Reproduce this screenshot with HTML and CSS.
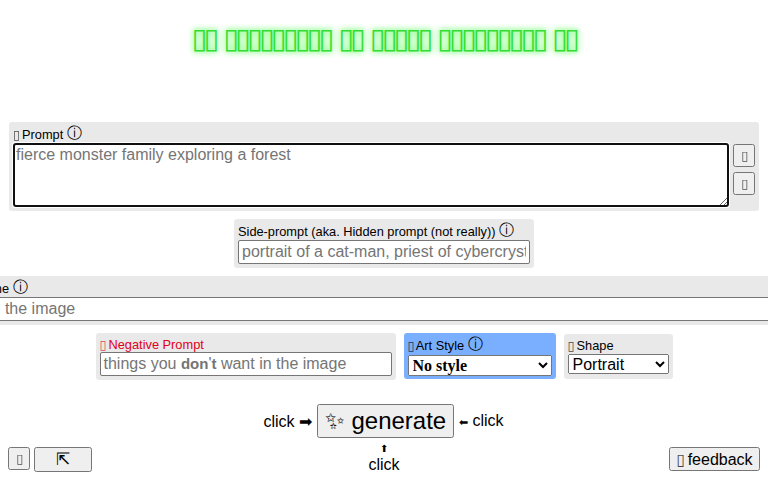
FILE: index.html
```html
<!DOCTYPE html>
<html lang="en">
<head>
    <meta charset="UTF-8">
    <meta name="viewport" content="width=device-width, initial-scale=1.0">
    <title>AI Image Generator</title>
    <link rel="stylesheet" href="styles.css">
</head>
<body>
    <h1 class="title"><span class="tofu">▯▯</span> <span class="tofu">▯▯▯▯▯▯▯▯▯</span> <span class="tofu">▯▯</span> <span class="tofu">▯▯▯▯▯</span> <span class="tofu">▯▯▯▯▯▯▯▯▯</span> <span class="tofu">▯▯</span></h1>

    <div class="prompt-panel">
        <div class="prompt-main">
            <div class="label"><span class="tofu">▯</span> Prompt <span class="info">ⓘ</span></div>
            <textarea class="prompt-input" placeholder="fierce monster family exploring a forest" autofocus></textarea>
        </div>
        <div class="prompt-tools">
            <button class="tool-btn"><span class="tofu">▯</span></button>
            <button class="tool-btn"><span class="tofu">▯</span></button>
        </div>
    </div>

    <div class="row">
        <div class="panel side-panel">
            <div class="label">Side-prompt (aka. Hidden prompt (not really)) <span class="info">ⓘ</span></div>
            <input class="text-input" placeholder="portrait of a cat-man, priest of cybercrystal">
        </div>
    </div>

    <div class="row">
        <div class="panel wide-panel">
            <div class="label wide-label">Image name <span class="info">ⓘ</span></div>
            <input class="text-input" placeholder="describe the image">
        </div>
    </div>

    <div class="row options">
        <div class="panel negative-panel">
            <div class="label negative-label"><span class="tofu">▯</span> Negative Prompt</div>
            <div class="text-input fake-input">things you <b>don</b>'<b>t</b> want in the image</div>
        </div>
        <div class="panel style-panel">
            <div class="label"><span class="tofu">▯</span> Art Style <span class="info">ⓘ</span></div>
            <select class="style-select"><option>No style</option></select>
        </div>
        <div class="panel shape-panel">
            <div class="label"><span class="tofu">▯</span> Shape</div>
            <select class="shape-select"><option>Portrait</option></select>
        </div>
    </div>

    <div class="generate-row">
        <span>click ➡</span>
        <button class="generate-btn">&#x2728;&#xFE0E; generate</button>
        <span><span class="small-arrow">⬅</span> click</span>
    </div>

    <div class="bottom-row">
        <div class="bottom-left">
            <button class="tool-btn"><span class="tofu">▯</span></button>
            <button class="corner-btn">⇱</button>
        </div>
        <div class="bottom-click">
            <div class="up-arrow">⬆</div>
            <div>click</div>
        </div>
        <div class="bottom-right">
            <button class="feedback-btn"><span class="tofu">▯</span> feedback</button>
        </div>
    </div>
</body>
</html>
```

FILE: styles.css
```css
* {
    box-sizing: border-box;
}

html, body {
    overflow: hidden;
}

body {
    margin: 0;
    height: 480px;
    padding: 0 8px;
    font-family: "Liberation Sans", Arial, sans-serif;
    font-size: 16px;
    color: #000;
    background: #fff;
}

.title {
    margin: 0;
    padding-top: 24px;
    height: 122px;
    text-align: center;
    font-size: 28px;
    font-weight: normal;
    line-height: 30px;
    color: #33dd33;
    text-shadow: 0 0 6px #00ff00;
}

/* narrow box that stands in for characters with no glyph */
.tofu {
    font-family: "DejaVu Sans", sans-serif;
    letter-spacing: -0.125em;
}

.label .tofu, .tool-btn .tofu, .feedback-btn .tofu {
    opacity: 0.7;
}

.label {
    height: 15px;
    font-size: 12.8px;
    line-height: 15px;
    white-space: nowrap;
}

.info {
    font-size: 14.5px;
    line-height: 15px;
    vertical-align: 1px;
}

.panel, .prompt-panel {
    background: #e9e9e9;
    border-radius: 3px;
    padding: 4px;
}

.prompt-panel {
    display: flex;
    gap: 4px;
    width: 750px;
    height: 89px;
    margin-left: 1px;
}

.prompt-main {
    flex: 1;
}

.prompt-input {
    display: block;
    width: 716px;
    height: 64px;
    margin-top: 2px;
    padding: 2px;
    font-family: inherit;
    font-size: 16px;
}

.prompt-tools {
    display: flex;
    flex-direction: column;
    gap: 5px;
    padding-top: 18px;
}

.tool-btn {
    width: 22px;
    height: 23px;
    padding: 0;
    font-family: inherit;
    font-size: 13px;
}

.row {
    display: flex;
    justify-content: center;
}

.side-panel {
    width: 300px;
    height: 49px;
    margin-top: 8px;
}

.wide-panel {
    flex: none;
    width: 904px;
    height: 49px;
    margin-top: 8px;
}

.wide-label {
    padding-left: 2px;
}

.text-input {
    display: block;
    width: 100%;
    height: 24px;
    margin-top: 2px;
    padding: 1px 3px;
    font-family: inherit;
    font-size: 16px;
    background: #fff;
    border: 1px solid #767676;
    border-radius: 2px;
}

.fake-input {
    margin-top: 0;
    color: #757575;
    line-height: 20px;
    white-space: nowrap;
}

.fake-input b {
    font-size: 15px;
}

.options {
    gap: 8px;
    margin-top: 8px;
    align-items: flex-start;
}

.negative-panel {
    width: 300px;
    height: 47px;
}

.negative-label {
    color: #e0001a;
}

.style-panel {
    width: 152px;
    height: 46px;
    background: #7aaeff;
}

.shape-panel {
    width: 109px;
    height: 45px;
    margin-top: 1px;
}

.style-select {
    display: block;
    width: 100%;
    height: 21px;
    margin-top: 3px;
    font-family: "Liberation Serif", serif;
    font-size: 16px;
    font-weight: bold;
}

.shape-select {
    display: block;
    width: 100%;
    height: 20px;
    margin-top: 1px;
    font-family: inherit;
    font-size: 16px;
}

.generate-row {
    display: flex;
    justify-content: center;
    align-items: center;
    gap: 5px;
    margin-top: 24px;
    padding-right: 1px;
}

.generate-btn {
    width: 137px;
    height: 34px;
    padding: 0;
    font-family: inherit;
    font-size: 24px;
}

.small-arrow {
    font-size: 11px;
}

.bottom-row {
    display: grid;
    grid-template-columns: 1fr auto 1fr;
    margin-top: 9px;
}

.bottom-left {
    display: flex;
    align-items: flex-start;
    gap: 4px;
}

.corner-btn {
    width: 58px;
    height: 25px;
    padding: 0;
    font-family: inherit;
    font-size: 17px;
}

.bottom-click {
    margin-top: -5px;
    text-align: center;
    line-height: 18px;
}

.up-arrow {
    font-size: 10px;
    line-height: 14px;
}

.bottom-right {
    display: flex;
    justify-content: flex-end;
    align-items: flex-start;
}

.feedback-btn {
    width: 91px;
    height: 24px;
    padding: 0;
    font-family: inherit;
    font-size: 16px;
    white-space: nowrap;
}
```
